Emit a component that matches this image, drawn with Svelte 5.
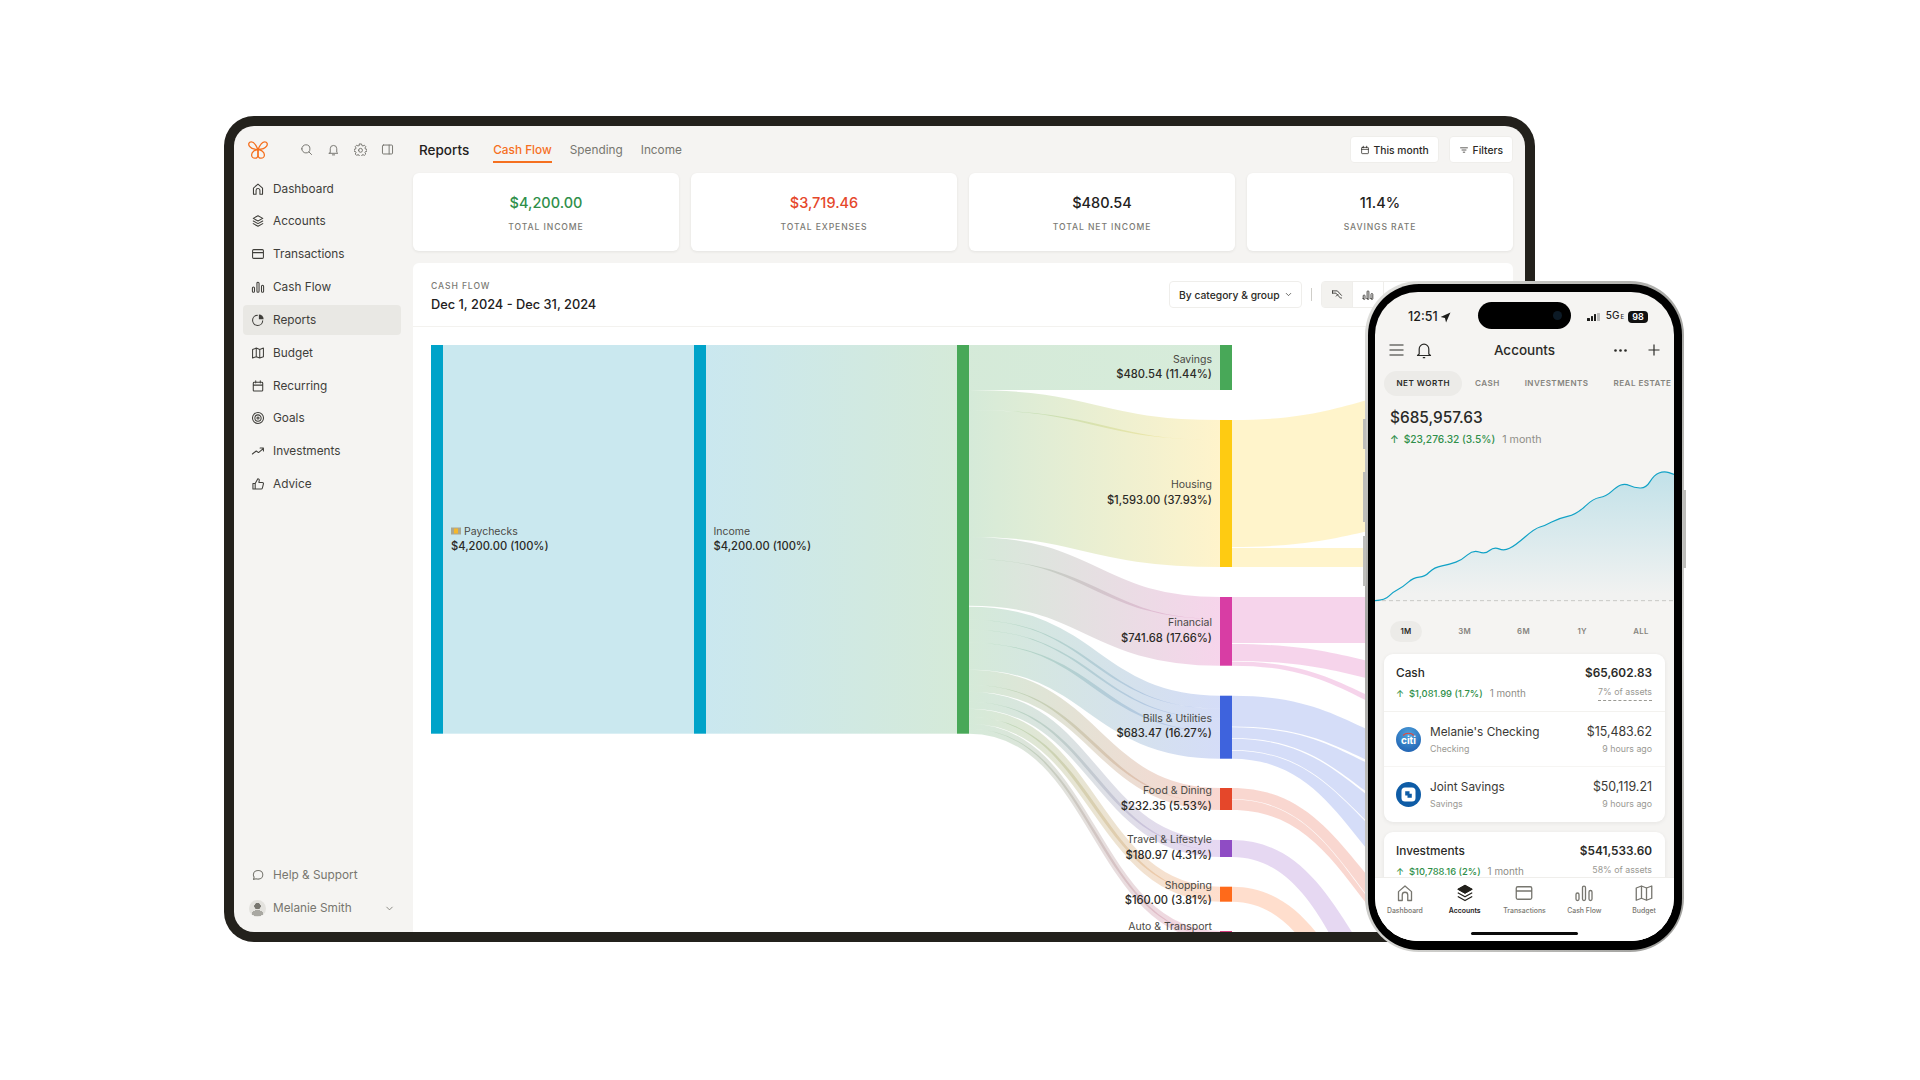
<script>
  const circle = (cx, cy, r) => `M${cx - r} ${cy}a${r} ${r} 0 1 0 ${r * 2} 0a${r} ${r} 0 1 0 ${-r * 2} 0z`;
  const capsule = (x, top, bottom, w = 2.4) =>
    `M${x} ${bottom - w / 2}V${top + w / 2}a${w / 2} ${w / 2} 0 0 1 ${w} 0V${bottom - w / 2}a${w / 2} ${w / 2} 0 0 1 ${-w} 0z`;

  const icons = {
    home: 'M2.8 14V6.9L8 2.4l5.2 4.5V14h-3V9.6a2.2 2.2 0 0 0-4.4 0V14z',
    layers: 'M8 2 2.6 5 8 8l5.4-3z M2.6 8 8 11l5.4-3 M2.6 11 8 14l5.4-3',
    card: 'M3 3h10a1.2 1.2 0 0 1 1.2 1.2v7.6A1.2 1.2 0 0 1 13 13H3a1.2 1.2 0 0 1-1.2-1.2V4.2A1.2 1.2 0 0 1 3 3z M1.8 6.4h12.4',
    bars: capsule(1.6, 8, 14) + capsule(6.8, 2.5, 14) + capsule(12, 6, 14),
    pie: 'M7.4 2.6a5.8 5.8 0 1 0 6 6.2',
    map: 'M1.8 4 6 2.4l4 1.6 4.2-1.6v9.8L10 13.8l-4-1.6-4.2 1.6z M6 2.4v9.8 M10 4v9.8',
    calendar: 'M3.6 3.8h8.8a1 1 0 0 1 1 1v8a1 1 0 0 1-1 1H3.6a1 1 0 0 1-1-1v-8a1 1 0 0 1 1-1z M2.6 7h10.8 M5.4 2v2.4 M10.6 2v2.4',
    target: circle(8, 8, 6.3) + circle(8, 8, 3.6) + circle(8, 8, 1.2),
    trend: 'M1.6 11.4 6 8l2.6 1.8 5.4-4.6 M10.4 4.6h3.8v3.4',
    thumb: 'M4.8 7.4v6.4H2.2V7.4z M4.8 7.4 7.8 2c1.2 0 1.9.9 1.6 2.1L9 6.2h3.9c.9 0 1.5.8 1.3 1.6l-1.2 5c-.2.7-.8 1-1.4 1H4.8',
    chat: 'M8.2 2.8c3 0 5.3 2.1 5.3 4.9s-2.3 5-5.3 5c-.9 0-1.7-.2-2.4-.5l-3 .8.8-2.6c-.6-.8-.9-1.7-.9-2.7 0-2.8 2.5-4.9 5.5-4.9z',
    search: circle(7.2, 7.2, 5) + 'M11 11l3.2 3.2',
    bell: 'M4 11.5V7a4 4 0 0 1 8 0v4.5l1.3 1.2H2.7z M6.6 14.6h2.8',
    gear: 'M6.7 1.2h2.6l.4 1.9 1.4.6 1.6-1 1.8 1.8-1 1.6.6 1.4 1.9.4v2.2l-1.9.4-.6 1.4 1 1.6-1.8 1.8-1.6-1-1.4.6-.4 1.9H6.7l-.4-1.9-1.4-.6-1.6 1-1.8-1.8 1-1.6-.6-1.4-1.9-.4V7.900l1.900-.4.6-1.4-1-1.6 1.800-1.800 1.600 1 1.400-.6z' + circle(8, 9, 2.4),
    panel: 'M3 2.5h10a1.2 1.2 0 0 1 1.2 1.2v8.6a1.2 1.2 0 0 1-1.2 1.2H3a1.2 1.2 0 0 1-1.2-1.2V3.7A1.2 1.2 0 0 1 3 2.5z M10 2.5v11',
    chevron: 'M4 6l4 4 4-4',
    filter: 'M2.5 4.5h11 M4.8 8h6.4 M6.8 11.500h2.400',
    sankey: 'M2 2.500h6.500l5.500 6 M2 5.500h4.500l6 6.500h1.500 M2 2.500v3 M9.500 7l-2.500 2.500'
  };

  const nav = [
    ['Dashboard', 'home'],
    ['Accounts', 'layers'],
    ['Transactions', 'card'],
    ['Cash Flow', 'bars'],
    ['Reports', 'pie'],
    ['Budget', 'map'],
    ['Recurring', 'calendar'],
    ['Goals', 'target'],
    ['Investments', 'trend'],
    ['Advice', 'thumb']
  ];

  const stats = [
    { value: '$4,200.00', label: 'TOTAL INCOME', tone: 'good' },
    { value: '$3,719.46', label: 'TOTAL EXPENSES', tone: 'bad' },
    { value: '$480.54', label: 'TOTAL NET INCOME', tone: '' },
    { value: '11.4%', label: 'SAVINGS RATE', tone: '' }
  ];

  // sankey: drawn in page coordinates, the viewBox lines them up with the panel
  const col = { a: 431, b: 694, c: 957, d: 1220, w: 12 };
  const groups = [
    { id: 'sav', color: '#48a858', from: 345, top: 345, h: 45, subs: [45] },
    { id: 'hou', color: '#fecb12', from: 390, top: 420, h: 147, subs: [20, 127] },
    { id: 'fin', color: '#d83da4', from: 537, top: 597, h: 68.7, subs: [22, 46.7] },
    { id: 'bil', color: '#3e63dd', from: 606.7, top: 695.7, h: 63, subs: [13, 10, 13, 27] },
    { id: 'foo', color: '#e5472a', from: 669.7, top: 788, h: 22, subs: [15, 7] },
    { id: 'tra', color: '#8f4cc4', from: 691.7, top: 840, h: 17, subs: [10, 7] },
    { id: 'sho', color: '#ff6a1a', from: 708.7, top: 886.7, h: 15, subs: [8, 7] },
    { id: 'aut', color: '#d43a7a', from: 723.7, top: 931, h: 10, subs: [5, 5] }
  ];

  const labels = [
    { name: 'Savings', amount: '$480.54 (11.44%)', y: 359 },
    { name: 'Housing', amount: '$1,593.00 (37.93%)', y: 484.5 },
    { name: 'Financial', amount: '$741.68 (17.66%)', y: 622.5 },
    { name: 'Bills & Utilities', amount: '$683.47 (16.27%)', y: 718 },
    { name: 'Food & Dining', amount: '$232.35 (5.53%)', y: 790.5 },
    { name: 'Travel & Lifestyle', amount: '$180.97 (4.31%)', y: 839.5 },
    { name: 'Shopping', amount: '$160.00 (3.81%)', y: 885 },
    { name: 'Auto & Transport', amount: '', y: 926.5 }
  ];

  function subLinks(g) {
    const x0 = col.c + col.w;
    const x1 = col.d;
    const mid = (x0 + x1) / 2;
    let offset = 0;
    return g.subs.map((h) => {
      const a = g.from + offset + h / 2;
      const b = g.top + offset + h / 2;
      offset += h;
      return { d: `M${x0} ${a}C${mid} ${a} ${mid} ${b} ${x1} ${b}`, h };
    });
  }

  function band(a0, b0, a1, b1) {
    const x0 = col.d + col.w;
    const x1 = 1483;
    const m = (x0 + x1) / 2;
    return `M${x0} ${a0}C${m} ${a0} ${m} ${a1} ${x1} ${a1}L${x1} ${b1}C${m} ${b1} ${m} ${b0} ${x0} ${b0}z`;
  }

  const outflows = [
    { id: 'hou', d: band(420, 547, 385.5, 520) },
    { id: 'hou', d: band(548, 567, 548, 567) },
    { id: 'fin', d: band(597, 643, 597, 643) },
    { id: 'fin', d: band(644, 661, 673, 691) },
    { id: 'fin', d: band(661.5, 665.7, 719.5, 726.6) },
    { id: 'bil', d: band(695.7, 726.5, 754, 785) },
    { id: 'bil', d: band(727.2, 738, 789, 832) },
    { id: 'bil', d: band(738.7, 750, 836, 874) },
    { id: 'bil', d: band(750.7, 758.7, 876, 916) },
    { id: 'foo', d: band(788, 799, 939, 966) },
    { id: 'foo', d: band(799.6, 810, 968, 974) },
    { id: 'tra', d: band(840, 857, 1042, 1123) },
    { id: 'sho', d: band(886.7, 901.7, 1108, 1190) }
  ];
  const colorOf = (id) => groups.find((g) => g.id === id).color;

  const linePoints = [
    [45, 977], [75, 975], [100, 950], [130, 935], [160, 908], [195, 905], [222, 877], [270, 868], [305, 855],
    [340, 824], [375, 838], [402, 815], [432, 828], [465, 812], [525, 760], [555, 752], [595, 730], [650, 718],
    [700, 670], [738, 665], [770, 635], [795, 625], [822, 638], [858, 640], [882, 600], [912, 588], [942, 598]
  ];

  // midpoints as joins keeps the line soft without a real spline
  function smooth(pts) {
    let d = `M${pts[0][0]} ${pts[0][1]}`;
    for (let i = 1; i < pts.length - 1; i++) {
      const mx = (pts[i][0] + pts[i + 1][0]) / 2;
      const my = (pts[i][1] + pts[i + 1][1]) / 2;
      d += `Q${pts[i][0]} ${pts[i][1]} ${mx} ${my}`;
    }
    const last = pts[pts.length - 1];
    return d + `L${last[0]} ${last[1]}`;
  }
  const linePath = smooth(linePoints);

  const phoneTabs = ['NET WORTH', 'CASH', 'INVESTMENTS', 'REAL ESTATE'];
  const ranges = ['1M', '3M', '6M', '1Y', 'ALL'];
  const bottomTabs = [
    ['Dashboard', 'home'],
    ['Accounts', 'layers'],
    ['Transactions', 'card'],
    ['Cash Flow', 'bars'],
    ['Budget', 'map']
  ];
</script>

{#snippet icon(name, size = 14)}
  <svg class="ico" width={size} height={size} viewBox="0 0 16 16" fill="none" stroke="currentColor" stroke-width="1.2" stroke-linejoin="round" stroke-linecap="round">
    <path d={icons[name]} />
    {#if name === 'pie'}
      <path d="M9 1.6v5.4h5.4A5.4 5.4 0 0 0 9 1.6z" fill="currentColor" stroke="none" />
    {/if}
  </svg>
{/snippet}

<div class="page">
  <div class="tablet">
    <div class="screen">
      <aside class="sidebar">
        <div class="side-top">
          <svg class="logo" width="20" height="18" viewBox="0 0 20 18" fill="none" stroke="#f5701f" stroke-width="1.3" stroke-linejoin="round">
            <path d="M10 8.5C8.5 5 6.5.8 3.3.8.8.8.1 3.200 1.400 5.200 3 7.600 7 8.500 10 8.500z" />
            <path d="M10 8.500c1.500-3.500 3.500-7.700 6.700-7.700 2.500 0 3.200 2.400 1.900 4.400C17 7.600 13 8.500 10 8.500z" />
            <path d="M10 8.500c-3.200.2-6.400 2.700-6.400 5.400 0 1.900 1.600 3.300 3.300 3.300 1.900 0 3.100-1.700 3.100-3.500z" />
            <path d="M10 8.500c3.200.2 6.400 2.700 6.400 5.400 0 1.900-1.600 3.300-3.300 3.300-1.900 0-3.100-1.700-3.100-3.500z" />
          </svg>
          <div class="side-tools">
            {@render icon('search', 13)}
            {@render icon('bell', 13)}
            {@render icon('gear', 13)}
            {@render icon('panel', 13)}
          </div>
        </div>
        <nav class="nav">
          {#each nav as [label, name]}
            <div class="nav-item" class:active={label === 'Reports'}>
              {@render icon(name)}
              <span>{label}</span>
            </div>
          {/each}
        </nav>
        <div class="side-foot">
          <div class="nav-item muted">
            {@render icon('chat')}
            <span>Help &amp; Support</span>
          </div>
          <div class="nav-item muted">
            <span class="avatar"></span>
            <span>Melanie Smith</span>
            <span class="foot-chevron">{@render icon('chevron', 11)}</span>
          </div>
        </div>
      </aside>

      <main class="main">
        <header class="topbar">
          <h1>Reports</h1>
          <div class="tabs">
            <span class="tab current">Cash Flow</span>
            <span class="tab">Spending</span>
            <span class="tab">Income</span>
          </div>
          <div class="actions">
            <button class="btn">{@render icon('calendar', 10)} This month</button>
            <button class="btn">{@render icon('filter', 10)} Filters</button>
          </div>
        </header>

        <section class="stats">
          {#each stats as s}
            <div class="stat">
              <div class="stat-value {s.tone}">{s.value}</div>
              <div class="stat-label">{s.label}</div>
            </div>
          {/each}
        </section>

        <section class="panel">
          <div class="panel-head">
            <div class="head-text">
              <div class="eyebrow">CASH FLOW</div>
              <div class="range">Dec 1, 2024 - Dec 31, 2024</div>
            </div>
            <div class="panel-tools">
              <button class="btn by"><span>By category &amp; group</span> {@render icon('chevron', 9)}</button>
              <span class="sep"></span>
              <div class="seg">
                <span class="cell on">{@render icon('sankey', 12)}</span>
                <span class="cell">{@render icon('bars', 12)}</span>
              </div>
            </div>
          </div>

          <svg class="sankey" viewBox="413 327 1100 605" width="1100" height="605">
            <defs>
              {#each groups as g}
                <linearGradient id="in-{g.id}" gradientUnits="userSpaceOnUse" x1={col.c + col.w} y1="0" x2={col.d} y2="0">
                  <stop offset="0" stop-color="#3f9f50" />
                  <stop offset="1" stop-color={g.color} />
                </linearGradient>
              {/each}
              <linearGradient id="income" gradientUnits="userSpaceOnUse" x1={col.b + col.w} y1="0" x2={col.c} y2="0">
                <stop offset="0" stop-color="#0e94b8" />
                <stop offset="1" stop-color="#3f9f50" />
              </linearGradient>
            </defs>

            <rect class="flow" x={col.a + col.w} y="345" width="251" height="388.7" fill="#0e94b8" />
            <rect class="flow" x={col.b + col.w} y="345" width="251" height="388.7" fill="url(#income)" />

            {#each groups as g}
              {#each subLinks(g) as l}
                <path class="flow" d={l.d} fill="none" stroke="url(#in-{g.id})" stroke-width={l.h} />
              {/each}
            {/each}
            {#each outflows as f}
              <path class="flow" d={f.d} fill={colorOf(f.id)} />
            {/each}

            <rect x={col.a} y="345" width={col.w} height="388.7" fill="#00a3c9" />
            <rect x={col.b} y="345" width={col.w} height="388.7" fill="#00a3c9" />
            <rect x={col.c} y="345" width={col.w} height="388.7" fill="#48a858" />
            {#each groups as g}
              <rect x={col.d} y={g.top} width={col.w} height={g.h} fill={g.color} />
            {/each}

            <rect x="451" y="527.5" width="10" height="7" fill="#a9a794" />
            <rect x="454" y="528.5" width="4" height="5" fill="#f5b82a" />
            <text class="n" x="464" y="531">Paychecks</text>
            <text class="v" x="451" y="546">$4,200.00 (100%)</text>
            <text class="n" x="713.5" y="531">Income</text>
            <text class="v" x="713.5" y="546">$4,200.00 (100%)</text>

            {#each labels as l}
              <text class="n end" x="1212" y={l.y}>{l.name}</text>
              {#if l.amount}
                <text class="v end" x="1212" y={l.y + 15}>{l.amount}</text>
              {/if}
            {/each}
          </svg>
        </section>
      </main>
    </div>
  </div>

  <div class="phone">
    <span class="side-btn l1"></span>
    <span class="side-btn l2"></span>
    <span class="side-btn l3"></span>
    <span class="side-btn r1"></span>
    <div class="bezel">
      <div class="pscreen">
        <div class="status">
          <div class="time">12:51
            <svg width="11" height="11" viewBox="0 0 10 10"><path d="M9.5.5 5.5 9.5 4.5 5.500.5 4.500z" fill="#1c1c1a" /></svg>
          </div>
          <div class="island"><span class="lens"></span></div>
          <div class="signal">
            <span class="sig s1"></span><span class="sig s2"></span><span class="sig s3"></span><span class="sig s4"></span>
            <span class="net">5G<small>E</small></span>
            <span class="batt">98</span>
          </div>
        </div>

        <div class="phead">
          <div class="phead-left">
            <svg width="15" height="12" viewBox="0 0 15 12" stroke="#2a2a27" stroke-width="1.2"><path d="M.5 1h14M.5 6h14M.5 11h14" /></svg>
            <svg width="16" height="17" viewBox="0 0 16 17" fill="none" stroke="#2a2a27" stroke-width="1.2" stroke-linejoin="round"><path d="M3.2 12V7a4.800 4.800 0 0 1 9.600 0v5l1.700 1.500h-13zM6.800 15.600h2.400" /></svg>
          </div>
          <span class="ptitle">Accounts</span>
          <div class="phead-right">
            <svg width="13" height="3" viewBox="0 0 13 3" fill="#2a2a27"><circle cx="1.5" cy="1.5" r="1.3" /><circle cx="6.5" cy="1.5" r="1.3" /><circle cx="11.5" cy="1.5" r="1.3" /></svg>
            <svg width="12" height="12" viewBox="0 0 12 12" stroke="#2a2a27" stroke-width="1.2"><path d="M6 .5v11M.5 6h11" /></svg>
          </div>
        </div>

        <div class="ptabs">
          {#each phoneTabs as t, i}
            <span class="ptab" class:sel={i === 0}>{t}</span>
          {/each}
        </div>

        <div class="worth">
          <div class="worth-value">$685,957.63</div>
          <div class="delta big">
            <span class="good">↑</span><span class="good">$23,276.32 (3.5%)</span><span class="when">1 month</span>
          </div>
        </div>

        <svg class="line" viewBox="45 540 897 447" width="299" height="149" preserveAspectRatio="none">
          <defs>
            <linearGradient id="area" x1="0" y1="0" x2="0" y2="1">
              <stop offset="0.05" stop-color="#c4e2e9" />
              <stop offset="0.95" stop-color="#f1f2f1" />
            </linearGradient>
          </defs>
          <path d="{linePath}L942 977L45 977z" fill="url(#area)" />
          <path d="M45 977H942" stroke="#c9c9c5" stroke-width="3" stroke-dasharray="12 9" fill="none" />
          <path d={linePath} stroke="#11a2c6" stroke-width="3.6" fill="none" stroke-linejoin="round" />
        </svg>

        <div class="ranges">
          {#each ranges as r, i}
            <span class="rng" class:sel={i === 0}>{r}</span>
          {/each}
        </div>

        <div class="pcard">
          <div class="pc-head">
            <div class="pc-line">
              <strong class="gname">Cash</strong>
              <strong class="gamount">$65,602.83</strong>
            </div>
            <div class="pc-line low">
              <div class="delta"><span class="good">↑</span><span class="good">$1,081.99 (1.7%)</span><span class="when">1 month</span></div>
              <span class="share">7% of assets</span>
            </div>
          </div>
          <div class="acct">
            <svg class="bank" width="25" height="25" viewBox="0 0 25 25">
              <defs>
                <radialGradient id="citi" cx="0.5" cy="0.3" r="0.8">
                  <stop offset="0" stop-color="#4fa3dd" />
                  <stop offset="1" stop-color="#1c5cae" />
                </radialGradient>
              </defs>
              <circle cx="12.5" cy="12.5" r="12.5" fill="url(#citi)" />
              <path d="M7 8.5c3-3 8-3 11 0" fill="none" stroke="#e2483c" stroke-width="1.2" />
              <text class="citi" x="12.5" y="16.5">citi</text>
            </svg>
            <div class="acct-main">
              <div class="aname">Melanie's Checking</div>
              <div class="asub">Checking</div>
            </div>
            <div class="acct-side">
              <div class="aname">$15,483.62</div>
              <div class="asub">9 hours ago</div>
            </div>
          </div>
          <div class="acct">
            <svg class="bank" width="25" height="25" viewBox="0 0 25 25">
              <circle cx="12.5" cy="12.5" r="12.5" fill="#0e5ca6" />
              <rect x="5.5" y="5.5" width="14" height="14" rx="3.5" fill="#fff" />
              <path d="M9.2 9.2h4.300v2.500h2.300v4.100h-4.300v-2.300H9.200z" fill="#0e5ca6" />
            </svg>
            <div class="acct-main">
              <div class="aname">Joint Savings</div>
              <div class="asub">Savings</div>
            </div>
            <div class="acct-side">
              <div class="aname">$50,119.21</div>
              <div class="asub">9 hours ago</div>
            </div>
          </div>
        </div>

        <div class="pcard second">
          <div class="pc-head">
            <div class="pc-line">
              <strong class="gname">Investments</strong>
              <strong class="gamount">$541,533.60</strong>
            </div>
            <div class="pc-line low">
              <div class="delta"><span class="good">↑</span><span class="good">$10,788.16 (2%)</span><span class="when">1 month</span></div>
              <span class="share">58% of assets</span>
            </div>
          </div>
        </div>

        <div class="tabbar">
          {#each bottomTabs as [label, name]}
            <div class="bt" class:sel={label === 'Accounts'}>
              <svg width="20" height="20" viewBox="0 0 16 16" fill="none" stroke="currentColor" stroke-width="1.05" stroke-linejoin="round" stroke-linecap="round">
                <path d={icons[name]} />
                {#if label === 'Accounts'}
                  <path d="M8 2 2.6 5 8 8l5.400-3z" fill="currentColor" />
                {/if}
              </svg>
              <span>{label}</span>
            </div>
          {/each}
          <span class="home-bar"></span>
        </div>
      </div>
    </div>
  </div>
</div>

<style>
  :global(body) {
    margin: 0;
    background: #fff;
  }

  .page {
    position: relative;
    width: 1920px;
    height: 1080px;
    overflow: hidden;
    box-sizing: border-box;
    padding: 116px 0 0 224px;
    background: #fff;
    font-family: Inter, "Liberation Sans", sans-serif;
    color: #23211c;
  }

  .tablet {
    box-sizing: border-box;
    width: 1311px;
    height: 826px;
    padding: 10px;
    background: #23211c;
    border-radius: 30px;
  }

  .screen {
    display: flex;
    height: 100%;
    background: #f5f4f2;
    border-radius: 20px;
    overflow: hidden;
  }

  .ico {
    display: block;
    flex: none;
  }

  .sidebar {
    box-sizing: border-box;
    flex: none;
    width: 179px;
    padding: 0 12px 9px 9px;
    display: flex;
    flex-direction: column;
  }

  .side-top {
    height: 47.5px;
    display: flex;
    align-items: center;
    padding-left: 5px;
  }

  .side-tools {
    display: flex;
    gap: 14px;
    margin-left: 32px;
    color: #777671;
  }

  .nav,
  .side-foot {
    display: flex;
    flex-direction: column;
    gap: 2.85px;
  }

  .side-foot {
    margin-top: auto;
  }

  .nav-item {
    height: 30px;
    display: flex;
    align-items: center;
    gap: 8px;
    padding-left: 8px;
    border-radius: 4px;
    font-size: 11.8px;
    color: #3f3e3a;
  }

  .nav-item.active {
    background: #e9e8e4;
  }

  .nav-item.muted {
    color: #77766f;
  }

  .avatar {
    width: 17px;
    height: 17px;
    margin-left: -2px;
    margin-right: -1px;
    flex: none;
    border-radius: 50%;
    background:
      radial-gradient(circle at 50% 36%, #77766f 0 3px, transparent 3.4px),
      radial-gradient(ellipse 6px 3px at 50% 78%, #a9a8a2 0 100%, transparent 100%),
      #e3e2de;
  }

  .foot-chevron {
    margin-left: auto;
    margin-right: 6px;
  }

  .main {
    flex: 1;
    min-width: 0;
    display: flex;
    flex-direction: column;
    padding-right: 12px;
  }

  .topbar {
    height: 47px;
    flex: none;
    display: flex;
    align-items: center;
    padding-left: 6px;
  }

  h1 {
    margin: 0;
    font-size: 13.5px;
    font-weight: 500;
  }

  .tabs {
    display: flex;
    gap: 18px;
    margin-left: 24px;
    align-self: stretch;
    align-items: center;
  }

  .tab {
    position: relative;
    font-size: 11.8px;
    font-weight: 400;
    color: #77766f;
  }

  .tab.current {
    color: #f5701f;
    font-weight: 500;
  }

  .tab.current::after {
    content: '';
    position: absolute;
    left: 0;
    right: 0;
    bottom: -6px;
    height: 1.5px;
    background: #f5701f;
  }

  .actions {
    display: flex;
    gap: 10px;
    margin-left: auto;
  }

  .btn {
    height: 27px;
    display: flex;
    align-items: center;
    gap: 4px;
    padding: 0 9px;
    border: 1px solid #efeeeb;
    border-radius: 4px;
    background: #fff;
    font: 500 10.3px Inter, "Liberation Sans", sans-serif;
    color: #2b2a26;
    white-space: nowrap;
  }

  .stats {
    display: grid;
    grid-template-columns: repeat(4, 1fr);
    gap: 12px;
    flex: none;
  }

  .stat {
    height: 78px;
    box-sizing: border-box;
    padding-top: 20px;
    background: #fff;
    border-radius: 6px;
    box-shadow: 0 1px 3px rgba(35, 33, 28, 0.08);
    text-align: center;
  }

  .stat-value {
    font-size: 14.5px;
    font-weight: 500;
    line-height: 20px;
  }

  .good {
    color: #2f8f4a;
  }

  .bad {
    color: #e5472a;
  }

  .stat-label {
    margin-top: 8px;
    font-size: 8.6px;
    line-height: 12px;
    letter-spacing: 0.9px;
    color: #7b7a74;
    font-weight: 500;
  }

  .panel {
    flex: 1;
    min-height: 0;
    margin-top: 12px;
    background: #fff;
    border-radius: 6px 6px 0 0;
    overflow: hidden;
  }

  .panel-head {
    box-sizing: border-box;
    height: 64px;
    display: flex;
    align-items: center;
    justify-content: space-between;
    padding: 0 18px;
    border-bottom: 1px solid #f3f2ef;
  }

  .head-text {
    padding-top: 4px;
  }

  .eyebrow {
    font-size: 8.6px;
    line-height: 12px;
    letter-spacing: 0.9px;
    font-weight: 500;
    color: #7b7a74;
  }

  .range {
    margin-top: 4px;
    font-size: 12.8px;
    line-height: 18px;
    font-weight: 500;
  }

  .panel-tools {
    display: flex;
    align-items: center;
    gap: 9px;
  }

  .btn.by {
    box-sizing: border-box;
    width: 133px;
    justify-content: space-between;
    padding: 0 9px;
  }

  .sep {
    width: 1px;
    height: 13px;
    background: #cfcec9;
  }

  .seg {
    width: 174px;
    height: 27px;
    display: flex;
    border: 1px solid #efeeeb;
    border-radius: 4px;
    box-sizing: border-box;
    color: #3a3935;
  }

  .cell {
    width: 30px;
    display: flex;
    align-items: center;
    justify-content: center;
    border-right: 1px solid #efeeeb;
  }

  .cell.on {
    background: #f3f2ef;
  }

  .sankey {
    display: block;
  }

  .flow {
    opacity: 0.22;
  }

  .sankey text {
    dominant-baseline: central;
  }

  .n {
    font-size: 10.5px;
    fill: #4a4944;
  }

  .v {
    font-size: 11.2px;
    font-weight: 500;
    fill: #2b2a26;
  }

  .end {
    text-anchor: end;
  }

  /* phone sits over the tablet */
  .phone {
    position: absolute;
    left: 1365px;
    top: 281px;
    box-sizing: border-box;
    width: 319px;
    height: 671px;
    padding: 2.5px;
    border-radius: 54px;
    background: linear-gradient(135deg, #e4e4e1, #a5a5a2 35%, #d5d5d2 70%, #9b9b98);
  }

  .side-btn {
    position: absolute;
    width: 3px;
    background: #bdbdba;
  }

  .l1 { left: -2px; top: 138px; height: 30px; }
  .l2 { left: -2px; top: 191px; height: 50px; }
  .l3 { left: -2px; top: 255px; height: 50px; }
  .r1 { right: -2px; top: 209px; height: 78px; }

  .bezel {
    box-sizing: border-box;
    height: 100%;
    padding: 8.5px 7.5px;
    background: #000;
    border-radius: 51px;
  }

  .pscreen {
    position: relative;
    height: 100%;
    background: #f5f4f2;
    border-radius: 43px;
    overflow: hidden;
    display: flex;
    flex-direction: column;
  }

  .status {
    position: relative;
    flex: none;
    height: 45px;
    display: flex;
    align-items: flex-start;
    justify-content: space-between;
    padding: 18px 26px 0 33px;
    box-sizing: border-box;
  }

  .time {
    display: flex;
    align-items: center;
    gap: 2px;
    font-size: 12.5px;
    line-height: 14px;
    font-weight: 500;
    color: #1c1c1a;
  }

  .island {
    position: absolute;
    left: 103px;
    top: 10px;
    width: 93px;
    height: 27px;
    border-radius: 14px;
    background: #000;
  }

  .lens {
    position: absolute;
    right: 9px;
    top: 9px;
    width: 9px;
    height: 9px;
    border-radius: 50%;
    background: #0c1a26;
  }

  .signal {
    display: flex;
    align-items: flex-end;
    gap: 1px;
    height: 14px;
  }

  .sig {
    width: 2.4px;
    margin-bottom: 3px;
    background: #1c1c1a;
    border-radius: 0.5px;
  }

  .s1 { height: 3px; }
  .s2 { height: 5px; }
  .s3 { height: 7px; }
  .s4 { height: 8px; background: #bbb; }

  .net {
    margin-left: 5px;
    margin-right: 3px;
    font-size: 10px;
    line-height: 14px;
    font-weight: 500;
  }

  .net small {
    font-size: 6px;
    margin-left: 1px;
  }

  .batt {
    align-self: center;
    width: 20px;
    height: 12px;
    border-radius: 4px;
    background: #111;
    color: #fff;
    font-size: 9px;
    line-height: 12px;
    font-weight: 600;
    text-align: center;
  }

  .phead {
    flex: none;
    height: 26px;
    display: grid;
    grid-template-columns: 1fr auto 1fr;
    align-items: center;
    padding: 0 14px;
  }

  .phead-left {
    display: flex;
    align-items: center;
    gap: 12px;
  }

  .phead-right {
    display: flex;
    align-items: center;
    gap: 21px;
    justify-content: flex-end;
  }

  .ptitle {
    font-size: 13.5px;
    font-weight: 500;
    color: #2a2a27;
  }

  .ptabs {
    flex: none;
    margin-top: 8px;
    height: 25px;
    display: flex;
    align-items: center;
    padding-left: 9px;
    white-space: nowrap;
  }

  .ptab {
    font-size: 8.1px;
    font-weight: 600;
    letter-spacing: 0.45px;
    color: #85847e;
    line-height: 25px;
    padding: 0 12.5px;
  }

  .ptab.sel {
    background: #ecebe8;
    border-radius: 13px;
    color: #2a2a27;
  }

  .worth {
    flex: none;
    padding: 12px 15px 0;
  }

  .worth-value {
    font-size: 15.4px;
    line-height: 20px;
    font-weight: 500;
    color: #2a2a27;
  }

  .delta {
    display: flex;
    align-items: center;
    gap: 5px;
    font-size: 9.4px;
    font-weight: 500;
  }

  .delta.big {
    margin-top: 4px;
    height: 14px;
    font-size: 10.2px;
  }

  .when {
    color: #8f8e88;
    font-weight: 400;
    margin-left: 2px;
    font-size: 1.05em;
  }

  .line {
    display: block;
    flex: none;
    margin-top: 9px;
  }

  .ranges {
    flex: none;
    margin-top: 17px;
    height: 21px;
    display: flex;
    justify-content: space-between;
    padding: 0 17px 0 15px;
  }

  .rng {
    width: 32px;
    text-align: center;
    font-size: 7.8px;
    line-height: 21px;
    font-weight: 600;
    letter-spacing: 0.3px;
    color: #85847e;
  }

  .rng.sel {
    background: #ecebe8;
    border-radius: 11px;
    color: #2a2a27;
  }

  .pcard {
    flex: none;
    margin: 12px 9px 0;
    background: #fff;
    border-radius: 9px;
    box-shadow: 0 1px 4px rgba(35, 33, 28, 0.07);
  }

  .pcard.second {
    margin-top: 10px;
    height: 120px;
  }

  .pc-head {
    box-sizing: border-box;
    height: 58px;
    padding: 11px 13px 0 12px;
    border-bottom: 1px solid #f3f2ef;
  }

  .pc-line {
    display: flex;
    justify-content: space-between;
    align-items: center;
    height: 16px;
  }

  .pc-line.low {
    margin-top: 4px;
  }

  .gname,
  .gamount {
    font-size: 11.8px;
    font-weight: 600;
    color: #2a2a27;
  }

  .gname {
    font-weight: 500;
  }

  .share {
    font-size: 8.8px;
    color: #9a9993;
    line-height: 12px;
    padding-bottom: 2px;
    border-bottom: 1px dashed #9a9993;
  }

  .acct {
    box-sizing: border-box;
    height: 55px;
    display: flex;
    align-items: center;
    padding: 0 13px 0 12px;
    gap: 9px;
    border-bottom: 1px solid #f6f5f3;
  }

  .acct:last-child {
    border-bottom: 0;
  }

  .bank {
    flex: none;
  }

  .citi {
    font-size: 10px;
    font-weight: 700;
    fill: #fff;
    text-anchor: middle;
  }

  .acct-main {
    flex: 1;
  }

  .acct-side {
    text-align: right;
  }

  .aname {
    font-size: 11.8px;
    line-height: 16px;
    color: #3a3935;
  }

  .acct-side .aname {
    font-size: 12.4px;
  }

  .asub {
    margin-top: 3px;
    font-size: 8.8px;
    line-height: 12px;
    color: #9a9993;
  }

  .tabbar {
    position: absolute;
    left: 0;
    right: 0;
    bottom: 0;
    height: 64px;
    box-sizing: border-box;
    padding: 5px 0 0;
    display: flex;
    justify-content: space-between;
    background: #fff;
    border-top: 1px solid #efeeeb;
    align-items: flex-start;
  }

  .bt {
    width: 59.8px;
    display: flex;
    flex-direction: column;
    align-items: center;
    gap: 3px;
    color: #77766f;
    font-size: 6.9px;
    font-weight: 500;
  }

  .bt.sel {
    color: #23211c;
    font-weight: 600;
  }

  .home-bar {
    position: absolute;
    left: 96px;
    bottom: 6px;
    width: 107px;
    height: 3.5px;
    border-radius: 2px;
    background: #0a0a0a;
  }
</style>
